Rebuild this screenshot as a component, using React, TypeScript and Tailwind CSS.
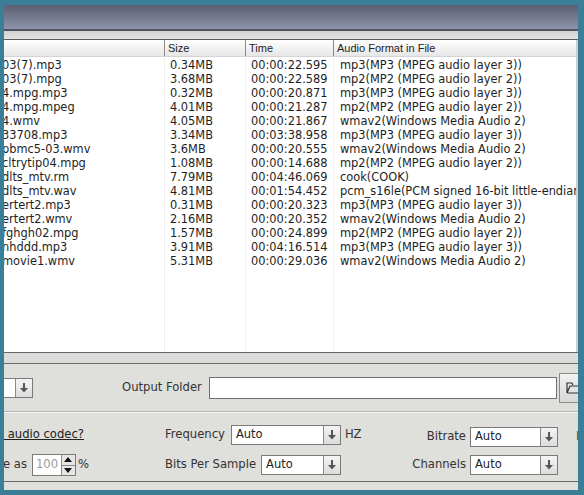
import React from "react";

const rows: [string, string, string, string][] = [
  ["03(7).mp3", "0.34MB", "00:00:22.595", "mp3(MP3 (MPEG audio layer 3))"],
  ["03(7).mpg", "3.68MB", "00:00:22.589", "mp2(MP2 (MPEG audio layer 2))"],
  ["4.mpg.mp3", "0.32MB", "00:00:20.871", "mp3(MP3 (MPEG audio layer 3))"],
  ["4.mpg.mpeg", "4.01MB", "00:00:21.287", "mp2(MP2 (MPEG audio layer 2))"],
  ["4.wmv", "4.05MB", "00:00:21.867", "wmav2(Windows Media Audio 2)"],
  ["33708.mp3", "3.34MB", "00:03:38.958", "mp3(MP3 (MPEG audio layer 3))"],
  ["pbmc5-03.wmv", "3.6MB", "00:00:20.555", "wmav2(Windows Media Audio 2)"],
  ["cltrytip04.mpg", "1.08MB", "00:00:14.688", "mp2(MP2 (MPEG audio layer 2))"],
  ["dlts_mtv.rm", "7.79MB", "00:04:46.069", "cook(COOK)"],
  ["dlts_mtv.wav", "4.81MB", "00:01:54.452", "pcm_s16le(PCM signed 16-bit little-endian)"],
  ["ertert2.mp3", "0.31MB", "00:00:20.323", "mp3(MP3 (MPEG audio layer 3))"],
  ["ertert2.wmv", "2.16MB", "00:00:20.352", "wmav2(Windows Media Audio 2)"],
  ["fghgh02.mpg", "1.57MB", "00:00:24.899", "mp2(MP2 (MPEG audio layer 2))"],
  ["nhddd.mp3", "3.91MB", "00:04:16.514", "mp3(MP3 (MPEG audio layer 3))"],
  ["movie1.wmv", "5.31MB", "00:00:29.036", "wmav2(Windows Media Audio 2)"],
];

function DownArrow() {
  return (
    <svg width="8" height="10" viewBox="0 0 8 10">
      <rect x="3" y="0" width="2" height="6" fill="#555" />
      <polygon points="0,5 8,5 4,9.5" fill="#555" />
    </svg>
  );
}

function ArrowButton() {
  return (
    <div className="flex h-full w-[17px] shrink-0 items-center justify-center border-l border-[#8a8a8a] bg-gradient-to-b from-[#f4f4f4] to-[#dcdcdc]">
      <DownArrow />
    </div>
  );
}

function Select({ width, value }: { width: string; value: string }) {
  return (
    <div className={`flex h-[20px] ${width} items-stretch border border-[#7a7a7a] bg-white`}>
      <div className="flex flex-1 items-center pl-[4px] text-[11.5px] text-[#222]">{value}</div>
      <ArrowButton />
    </div>
  );
}

export default function App() {
  const sans = { fontFamily: '"DejaVu Sans", Verdana, sans-serif' };
  const narrow = { fontFamily: '"Liberation Sans", Tahoma, Arial, sans-serif' };

  return (
    <div className="h-[495px] w-[584px] overflow-hidden bg-[#3b7e97] pl-[4px] pt-[5px]" style={sans}>
      <div className="flex h-[485px] w-[574px] flex-col overflow-hidden bg-[#dfdfdb]">
        {/* title gradient */}
        <div className="h-[24px] shrink-0 bg-gradient-to-b from-[#5b5f72] to-[#8e94a9]" />
        <div className="h-[2px] shrink-0 bg-[#50545f]" />
        <div className="h-[8px] shrink-0 bg-gradient-to-b from-[#d2d2d2] to-[#e2e2e2]" />
        <div className="h-[1px] shrink-0 bg-[#5a5a5a]" />

        {/* list */}
        <div className="flex h-[312px] shrink-0 flex-col border-r-2 border-[#d0d0d0] bg-white">
          <div className="flex h-[17px] shrink-0 border-b border-[#d4d4d4] bg-gradient-to-b from-white to-[#e6e6e6] text-[11px] text-[#222]" style={narrow}>
            <div className="w-[160px] shrink-0" />
            <div className="flex w-[81px] shrink-0 items-center border-l border-[#8c8c8c] pl-[3px]">Size</div>
            <div className="flex w-[88px] shrink-0 items-center border-l border-[#8c8c8c] pl-[3px]">Time</div>
            <div className="flex flex-1 items-center border-l border-[#8c8c8c] pl-[3px]">Audio Format in File</div>
          </div>
          <div className="relative flex-1">
            <div className="pointer-events-none absolute inset-0 flex">
              <div className="w-[160px] shrink-0" />
              <div className="w-[81px] shrink-0 border-l border-[#f0f0f0]" />
              <div className="w-[88px] shrink-0 border-l border-[#f0f0f0]" />
              <div className="flex-1 border-l border-[#f0f0f0]" />
            </div>
            <div className="relative pt-[1px]">
              {rows.map((r, i) => (
                <div key={i} className="flex h-[14px] items-center whitespace-nowrap text-[11.4px] leading-[14px] text-[#1e1e1e]">
                  <div className="ml-[-2px] w-[162px] shrink-0 overflow-hidden">{r[0]}</div>
                  <div className="w-[81px] shrink-0 pl-[6px]">{r[1]}</div>
                  <div className="w-[88px] shrink-0 pl-[6px]">{r[2]}</div>
                  <div className="flex-1 overflow-hidden pl-[7px]">{r[3]}</div>
                </div>
              ))}
            </div>
          </div>
        </div>

        <div className="h-[1px] shrink-0 bg-[#666]" />
        <div className="h-[10px] shrink-0 bg-[#dcdcdc]" />
        <div className="h-[1px] shrink-0 bg-[#6b6b6b]" />

        {/* settings panel */}
        <div className="flex h-[117px] shrink-0 flex-col text-[11.6px] text-[#333]">
          <div className="flex h-[47px] shrink-0 items-center whitespace-nowrap">
            <div className="ml-[-20px] flex h-[20px] w-[49px] shrink-0 items-stretch border border-[#7a7a7a] bg-white">
              <div className="flex-1" />
              <ArrowButton />
            </div>
            <span className="ml-[89px]">Output Folder</span>
            <div className="ml-[7px] h-[22px] w-[348px] shrink-0 border border-[#6e6e6e] bg-white" />
            <div className="ml-[2px] flex h-[30px] w-[30px] shrink-0 items-center border border-[#8a8a8a] bg-gradient-to-b from-[#f2f2f2] to-[#d8d8d8] pl-[6px]">
              <svg width="18" height="12" viewBox="0 0 18 12">
                <path d="M1 11 L4 4 L17 4 M1 11 L15 11 M1 11 L1 1 L6 1 L7 3" fill="none" stroke="#333" strokeWidth="1.2" />
              </svg>
            </div>
          </div>
          <div className="h-[2px] shrink-0 border-t border-b border-t-[#b4b4b4] border-b-[#f6f6f6]" />

          <div className="mt-[11px] flex h-[21px] items-center whitespace-nowrap">
            <div className="w-[161px] shrink-0">
              <span className="text-[#222] underline">{"\u00a0audio codec?"}</span>
            </div>
            <div className="flex w-[239px] shrink-0 items-center">
              <span>Frequency</span>
              <div className="ml-[6px]">
                <Select width="w-[110px]" value="Auto" />
              </div>
              <span className="ml-[4px]">HZ</span>
            </div>
            <div className="mt-[4px] flex items-center">
              <span className="w-[62px] text-right">Bitrate</span>
              <div className="ml-[4px]">
                <Select width="w-[88px]" value="Auto" />
              </div>
              <span className="ml-[18px] text-[#8a3a2a]">Kbps</span>
            </div>
          </div>

          <div className="mt-[9px] flex h-[22px] items-center whitespace-nowrap">
            <div className="flex w-[161px] shrink-0 items-center">
              <span className="ml-[-1px]">e as</span>
              <div className="ml-[5px] flex h-[22px] w-[44px] items-stretch border border-[#7a7a7a] bg-white">
                <div className="flex flex-1 items-center pl-[3px] text-[#9a9a9a]">100</div>
                <div className="flex w-[14px] flex-col border-l border-[#8a8a8a] bg-[#e6e6e6]">
                  <div className="flex flex-1 items-center justify-center border-b border-[#8a8a8a]">
                    <svg width="8" height="5" viewBox="0 0 8 5"><polygon points="0,5 8,5 4,0" fill="#111" /></svg>
                  </div>
                  <div className="flex flex-1 items-center justify-center">
                    <svg width="8" height="5" viewBox="0 0 8 5"><polygon points="0,0 8,0 4,5" fill="#111" /></svg>
                  </div>
                </div>
              </div>
              <span className="ml-[2px]">%</span>
            </div>
            <div className="flex w-[239px] shrink-0 items-center">
              <span>Bits Per Sample</span>
              <div className="ml-[5px]">
                <Select width="w-[80px]" value="Auto" />
              </div>
            </div>
            <div className="flex items-center">
              <span className="w-[62px] text-right">Channels</span>
              <div className="ml-[4px]">
                <Select width="w-[88px]" value="Auto" />
              </div>
            </div>
          </div>
        </div>

        <div className="h-[1px] shrink-0 bg-[#6a6a6a]" />
        <div className="flex-1 bg-[#dfdfdb]" />
      </div>
    </div>
  );
}
